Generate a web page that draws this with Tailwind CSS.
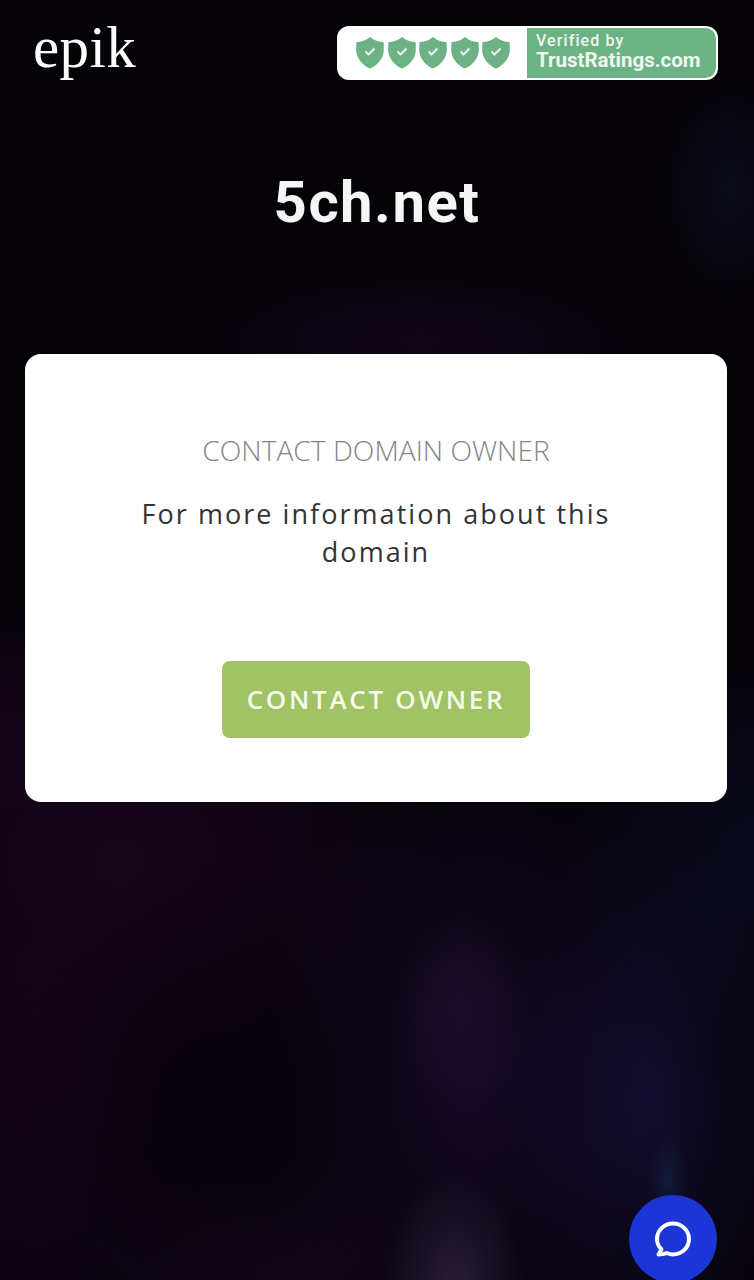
<!DOCTYPE html>
<html lang="en">
<head>
<meta charset="utf-8">
<script src="https://cdn.jsdelivr.net/npm/@tailwindcss/browser@4"></script>
<title>5ch.net</title>
</head>
<body class="m-0">
<div class="relative w-[754px] h-[1280px] overflow-hidden bg-[#050208] font-['Open_Sans',sans-serif] bg-[radial-gradient(ellipse_170px_230px_at_195px_1090px,#070109ee,transparent),radial-gradient(ellipse_70px_120px_at_455px_1290px,#2f2440cc,transparent),radial-gradient(ellipse_70px_110px_at_460px_1010px,#201230aa,transparent),radial-gradient(ellipse_20px_45px_at_668px_1180px,#12284a99,transparent),radial-gradient(ellipse_150px_280px_at_650px_1100px,#151038bb,transparent),radial-gradient(ellipse_220px_330px_at_480px_1080px,#180a2ccc,transparent),radial-gradient(ellipse_200px_200px_at_760px_860px,#0c0d26cc,transparent),radial-gradient(ellipse_320px_280px_at_120px_860px,#1c0520dd,transparent),radial-gradient(ellipse_240px_300px_at_40px_1100px,#16041ecc,transparent),radial-gradient(ellipse_200px_120px_at_280px_1270px,#1d0a2899,transparent),radial-gradient(ellipse_220px_70px_at_420px_340px,#1c0a2b88,transparent),radial-gradient(ellipse_70px_110px_at_730px_190px,#12142c88,transparent),radial-gradient(ellipse_120px_120px_at_0px_740px,#1a051f99,transparent)]">

  <header class="flex items-start justify-between pl-[33px] pr-[36px] pt-[26px]">
    <div class="font-['Liberation_Serif',serif] text-white text-[59px] leading-[42px] tracking-[0.4px] w-[103px] h-[54px]">epik</div>
    <div class="flex w-[381px] h-[54px] rounded-[12px] border-2 border-white bg-white overflow-hidden">
      <div class="w-[188px] flex items-center gap-[1.500px] pl-[16px] pb-[2px]">
        <svg class="w-[30px] h-[33px]" viewBox="0 0 30 33"><path fill="#6db285" d="M15 1 C19 4.500 23.500 6 28.500 6 C29 12 29 16 28 19 C26 25 21 30 15 32.500 C9 30 4 25 2 19 C1 16 1 12 1.500 6 C6.500 6 11 4.500 15 1 Z"/><path d="M10.500 15.500 L13.500 18.500 L19.500 12.500" fill="none" stroke="#e8f5ec" stroke-width="2"/></svg>
        <svg class="w-[30px] h-[33px]" viewBox="0 0 30 33"><path fill="#6db285" d="M15 1 C19 4.500 23.500 6 28.500 6 C29 12 29 16 28 19 C26 25 21 30 15 32.500 C9 30 4 25 2 19 C1 16 1 12 1.500 6 C6.500 6 11 4.500 15 1 Z"/><path d="M10.500 15.500 L13.500 18.500 L19.500 12.500" fill="none" stroke="#e8f5ec" stroke-width="2"/></svg>
        <svg class="w-[30px] h-[33px]" viewBox="0 0 30 33"><path fill="#6db285" d="M15 1 C19 4.500 23.500 6 28.500 6 C29 12 29 16 28 19 C26 25 21 30 15 32.500 C9 30 4 25 2 19 C1 16 1 12 1.500 6 C6.500 6 11 4.500 15 1 Z"/><path d="M10.500 15.500 L13.500 18.500 L19.500 12.500" fill="none" stroke="#e8f5ec" stroke-width="2"/></svg>
        <svg class="w-[30px] h-[33px]" viewBox="0 0 30 33"><path fill="#6db285" d="M15 1 C19 4.500 23.500 6 28.500 6 C29 12 29 16 28 19 C26 25 21 30 15 32.500 C9 30 4 25 2 19 C1 16 1 12 1.500 6 C6.500 6 11 4.500 15 1 Z"/><path d="M10.500 15.500 L13.500 18.500 L19.500 12.500" fill="none" stroke="#e8f5ec" stroke-width="2"/></svg>
        <svg class="w-[30px] h-[33px]" viewBox="0 0 30 33"><path fill="#6db285" d="M15 1 C19 4.500 23.500 6 28.500 6 C29 12 29 16 28 19 C26 25 21 30 15 32.500 C9 30 4 25 2 19 C1 16 1 12 1.500 6 C6.500 6 11 4.500 15 1 Z"/><path d="M10.500 15.500 L13.500 18.500 L19.500 12.500" fill="none" stroke="#e8f5ec" stroke-width="2"/></svg>
      </div>
      <div class="flex-1 bg-[#6db285] rounded-r-[10px] flex flex-col justify-center pl-[9px] pb-[4px] font-['Roboto',sans-serif] text-[#eef7f0]">
        <div class="text-[16px] leading-[18px] font-medium tracking-[1.100px]">Verified by</div>
        <div class="text-[20.500px] leading-[20px] font-bold">TrustRatings.com</div>
      </div>
    </div>
  </header>

  <h1 class="mt-[90px] text-center font-['Roboto',sans-serif] font-bold text-[58px] leading-[64px] tracking-[1.500px] text-[#f5f5f5]">5ch.net</h1>

  <section class="ml-[25px] mt-[120px] w-[702px] h-[448px] rounded-[16px] bg-white pt-[81px] text-center">
    <h2 class="text-[28.200px] leading-[30px] font-light text-[#858585]">CONTACT DOMAIN OWNER</h2>
    <p class="mx-auto mt-[30px] w-[520px] text-[27px] leading-[38px] tracking-[2.050px] text-[#333333]">For more information about this domain</p>
    <a class="mx-auto mt-[90px] flex items-center justify-center w-[308px] h-[77px] rounded-[8px] bg-[#a1c265] text-[26px] font-semibold tracking-[2.700px] text-[#f6faea]">CONTACT OWNER</a>
  </section>

  <button class="absolute left-[629px] top-[1195px] w-[88px] h-[88px] rounded-full bg-[#1c35d6] flex items-center justify-center" aria-label="Chat">
    <svg class="w-[38px] h-[38px]" viewBox="0 0 38 38" fill="none"><path d="M4.500 34.500 L7.500 29.500 C4.500 26.500 3 23 3 19 C3 10.500 10 3.500 19 3.500 C28 3.500 35 10.500 35 19 C35 27.500 28 34.500 19 34.500 C17 34.500 15 34 13 33 C10.500 34 7.500 34.500 4.500 34.500 Z" stroke="#ffffff" stroke-width="4" stroke-linejoin="round"/></svg>
  </button>
</div>
</body>
</html>
